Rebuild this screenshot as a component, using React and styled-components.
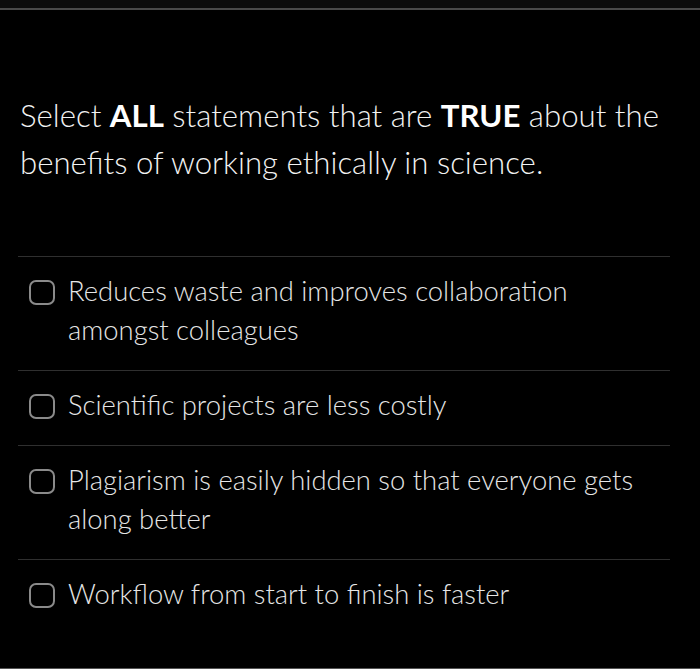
import React from "react";
import styled, { createGlobalStyle } from "styled-components";

const Global = createGlobalStyle`
  html, body { margin: 0; padding: 0; background: #000; }
  body { font-family: Lato, "Noto Sans", sans-serif; }
`;

const Page = styled.div`
  width: 700px;
  height: 669px;
  box-sizing: border-box;
  background: #000;
  display: flex;
  flex-direction: column;
  overflow: hidden;
  border-bottom: 1px solid #555;
`;

const TopStrip = styled.div`
  height: 8px;
  background: #0c0c0c;
  border-bottom: 2px solid #4a4a4a;
  flex-shrink: 0;
`;

const Question = styled.p`
  margin: 82px 20px 0 20px;
  font-size: 31.2px;
  line-height: 47px;
  font-weight: 300;
  color: #f2f2f2;
  b { font-weight: 700; color: #fff; }
`;

const Options = styled.div`
  margin: 70px 30px 0 18px;
  display: flex;
  flex-direction: column;
`;

const Option = styled.label`
  display: flex;
  align-items: flex-start;
  gap: 13px;
  border-top: 1px solid #2f2f2f;
  padding: 14px 12px 21px 11px;
  cursor: pointer;
`;

const Box = styled.span`
  flex-shrink: 0;
  width: 22px;
  height: 21px;
  margin-top: 9px;
  border: 2.5px solid #8a8a8a;
  border-radius: 7px;
`;

const OptionText = styled.span`
  font-size: 27.4px;
  line-height: 39px;
  font-weight: 300;
  color: #e6e6e6;
`;

const options = [
  "Reduces waste and improves collaboration amongst colleagues",
  "Scientific projects are less costly",
  "Plagiarism is easily hidden so that everyone gets along better",
  "Workflow from start to finish is faster",
];

export default function App() {
  return (
    <Page>
      <Global />
      <TopStrip />
      <Question>
        Select <b>ALL</b> statements that are <b>TRUE</b> about the benefits of
        working ethically in science.
      </Question>
      <Options>
        {options.map((o) => (
          <Option key={o}>
            <Box />
            <OptionText>{o}</OptionText>
          </Option>
        ))}
      </Options>
    </Page>
  );
}
